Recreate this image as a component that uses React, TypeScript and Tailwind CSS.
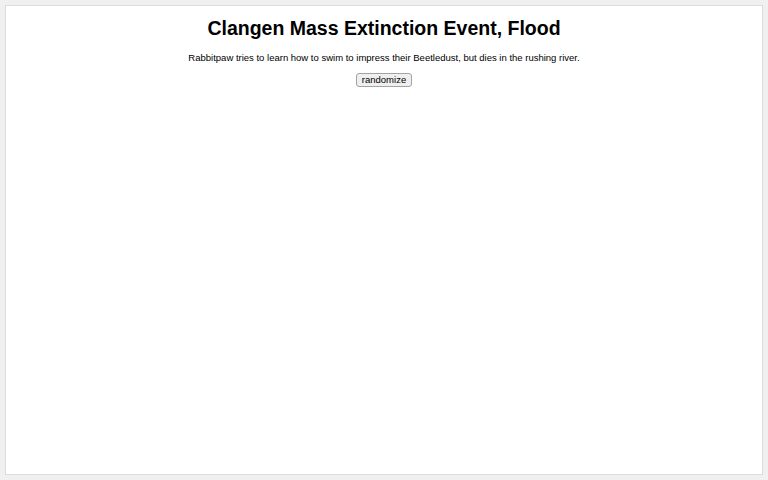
export default function App() {
  return (
    <div className="h-[480px] w-full bg-[#f0f0f0] p-[5px] font-['Liberation_Sans',Arial,sans-serif]">
      <div className="flex h-[470px] flex-col items-center border border-[#dcdcdc] bg-white">
        <h1 className="mt-[10px] text-[19.5px] font-bold leading-[24px] text-black">
          Clangen Mass Extinction Event, Flood
        </h1>
        <p className="mt-[12px] text-[9.5px] leading-[12px] text-black">
          Rabbitpaw tries to learn how to swim to impress their Beetledust, but dies in the rushing river.
        </p>
        <button className="mt-[9px] h-[14px] rounded-[3px] border border-[#a3a3a3] bg-[#efefef] px-[4.5px] text-[9.5px] leading-[12px] text-black">
          randomize
        </button>
      </div>
    </div>
  );
}
